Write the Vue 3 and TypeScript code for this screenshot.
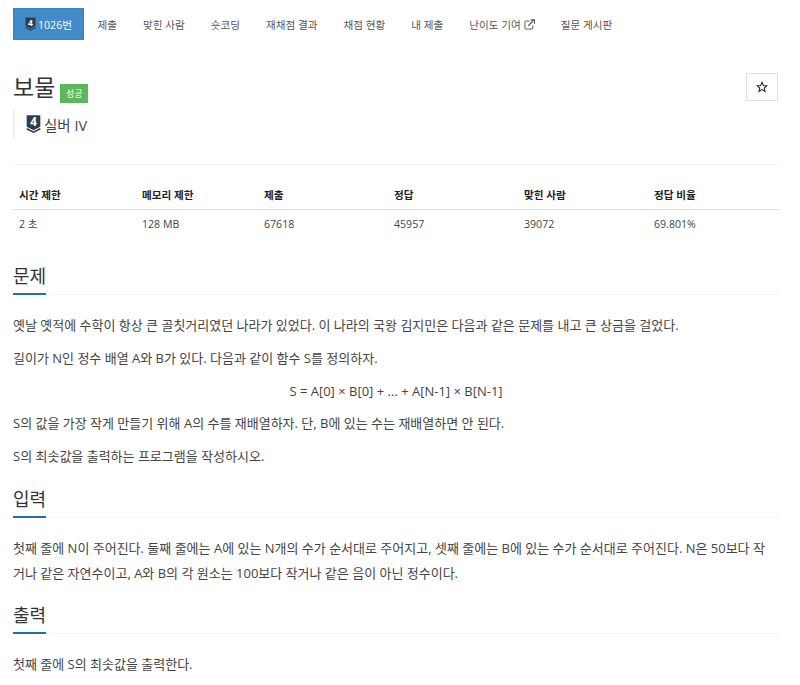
<template>
<div class="page">
	<nav class="tabs">
		<a class="tab active">
			<svg class="tier small" viewBox="1 0 22 28"><path fill="#2c3e50" d="M2 1h20v17l-10 5-10-5z"/><path fill="none" stroke="#2c3e50" stroke-width="2.4" d="M2 21l10 5 10-5"/><text x="12" y="17" text-anchor="middle" class="tier-num">4</text></svg>
			1026번
		</a>
		<a v-for="tab in tabs" :key="tab" class="tab">{{ tab }}</a>
		<a class="tab">
			난이도 기여
			<svg class="ext" viewBox="0 0 14 14"><path fill="none" stroke="#555" stroke-width="1.2" d="M7 2.6H2.2a1 1 0 0 0-1 1v8.2a1 1 0 0 0 1 1h8a1 1 0 0 0 1-1V8"/><path fill="none" stroke="#555" stroke-width="1.5" d="M5.4 8.6L12.4 1.6M8.4 1h5v5"/></svg>
		</a>
		<a class="tab">질문 게시판</a>
	</nav>

	<header class="head">
		<div class="title-row">
			<h1>보물</h1>
			<span class="label">성공</span>
		</div>
		<button class="star" type="button">
			<svg viewBox="0 0 14 14"><path fill="none" stroke="#222" stroke-width="1.2" d="M7 1.5l1.6 3.7 4 .4-3 2.6.9 3.9L7 10.1l-3.5 2 .9-3.9-3-2.6 4-.4z"/></svg>
		</button>
	</header>
	<div class="tier-row">
		<svg class="tier" viewBox="1 0 22 28"><path fill="#2c3e50" d="M2 1h20v17l-10 5-10-5z"/><path fill="none" stroke="#2c3e50" stroke-width="2.4" d="M2 21l10 5 10-5"/><text x="12" y="17" text-anchor="middle" class="tier-num">4</text></svg>
		<span>실버 IV</span>
	</div>

	<hr class="rule" />

	<div class="stats">
		<div class="stats-row heads">
			<div v-for="s in stats" :key="s.name">{{ s.name }}</div>
		</div>
		<div class="stats-row vals">
			<div v-for="s in stats" :key="s.name">{{ s.value }}</div>
		</div>
	</div>

	<section class="sec first">
		<h2><span>문제</span></h2>
		<p>옛날 옛적에 수학이 항상 큰 골칫거리였던 나라가 있었다. 이 나라의 국왕 김지민은 다음과 같은 문제를 내고 큰 상금을 걸었다.</p>
		<p>길이가 N인 정수 배열 A와 B가 있다. 다음과 같이 함수 S를 정의하자.</p>
		<p class="center">S = A[0] × B[0] + ... + A[N-1] × B[N-1]</p>
		<p>S의 값을 가장 작게 만들기 위해 A의 수를 재배열하자. 단, B에 있는 수는 재배열하면 안 된다.</p>
		<p>S의 최솟값을 출력하는 프로그램을 작성하시오.</p>
	</section>

	<section class="sec">
		<h2><span>입력</span></h2>
		<p class="narrow">첫째 줄에 N이 주어진다. 둘째 줄에는 A에 있는 N개의 수가 순서대로 주어지고, 셋째 줄에는 B에 있는 수가 순서대로 주어진다. N은 50보다 작거나 같은 자연수이고, A와 B의 각 원소는 100보다 작거나 같은 음이 아닌 정수이다.</p>
	</section>

	<section class="sec">
		<h2><span>출력</span></h2>
		<p>첫째 줄에 S의 최솟값을 출력한다.</p>
	</section>
</div>
</template>

<script setup lang="ts">
const tabs = ['제출', '맞힌 사람', '숏코딩', '재채점 결과', '채점 현황', '내 제출'];

const stats = [
  { name: '시간 제한', value: '2 초' },
  { name: '메모리 제한', value: '128 MB' },
  { name: '제출', value: '67618' },
  { name: '정답', value: '45957' },
  { name: '맞힌 사람', value: '39072' },
  { name: '정답 비율', value: '69.801%' },
];
</script>

<style scoped>
.page {
  box-sizing: border-box;
  width: 800px;
  height: 685px;
  overflow: hidden;
  padding: 8px 21px 0 13px;
  background: #fff;
  color: #333;
  font-family: "Open Sans", "Noto Sans CJK KR", sans-serif;
  font-size: 13px;
}

.tabs {
  display: flex;
  height: 32px;
  font-size: 10.6px;
  color: #555;
}

.tab {
  display: flex;
  align-items: center;
  gap: 3px;
  padding: 0 13px;
  white-space: nowrap;
}

.tab.active {
  background: #428bca;
  border: 1px solid #3c80bc;
  box-sizing: border-box;
  width: 71px;
  margin-right: 0.5px;
  padding: 0 0 0 11px;
  color: #fff;
  gap: 2px;
}

.tier {
  width: 15px;
  height: 20px;
}

.tier.small {
  width: 11px;
  height: 14px;
}

.tier-num {
  fill: #fff;
  font-size: 17px;
  font-weight: 700;
  font-family: "Open Sans", sans-serif;
}

.ext {
  width: 11px;
  height: 11px;
}

.head {
  display: flex;
  justify-content: space-between;
  align-items: flex-start;
  margin-top: 33px;
}

.title-row {
  display: flex;
  align-items: flex-end;
  gap: 5px;
  height: 29px;
}

h1 {
  margin: 0;
  font-size: 23px;
  font-weight: 400;
  line-height: 29px;
  color: #333;
}

.label {
  display: block;
  width: 28px;
  height: 19px;
  margin-bottom: -1px;
  background: #5cb85c;
  color: #fff;
  font-size: 9px;
  line-height: 19px;
  text-align: center;
}

.star {
  box-sizing: border-box;
  width: 32px;
  height: 28px;
  margin-right: 1px;
  padding: 0;
  background: #fff;
  border: 1px solid #e0e0e0;
  display: flex;
  align-items: center;
  justify-content: center;
}

.star svg {
  width: 12px;
  height: 12px;
}

.tier-row {
  display: flex;
  align-items: center;
  gap: 3px;
  height: 30px;
  margin-top: 7px;
  padding-left: 11px;
  border-left: 2px solid #eee;
  font-size: 14.5px;
  color: #444;
}

.rule {
  margin: 25px 0 0;
  border: 0;
  border-top: 1px solid #f2f2f2;
}

.stats {
  margin-top: 14px;
  font-size: 10.6px;
}

.stats-row {
  display: grid;
  grid-template-columns: 123px 122px 130px 130px 130px 1fr;
  padding-left: 6px;
  align-items: center;
  color: #444;
}

.stats-row.heads {
  height: 30px;
  font-weight: 700;
  color: #222;
  border-bottom: 1px solid #ddd;
}

.stats-row.vals {
  height: 27px;
}

.sec {
  margin-top: 15.5px;
}

.sec.first {
  margin-top: 25px;
}

h2 {
  margin: 0;
  height: 32px;
  border-bottom: 1px solid #f5f5f5;
  font-size: 18px;
  font-weight: 400;
  line-height: 29px;
  color: #333;
}

h2 span {
  display: inline-block;
  height: 31px;
  border-bottom: 2px solid #1f6fa8;
}

p {
  margin: 18px 0 0;
  line-height: 25px;
  font-size: 13px;
  color: #444;
}

p + p {
  margin-top: 7.75px;
}

p.center {
  text-align: center;
}

p.narrow {
  max-width: 762px;
}
</style>
